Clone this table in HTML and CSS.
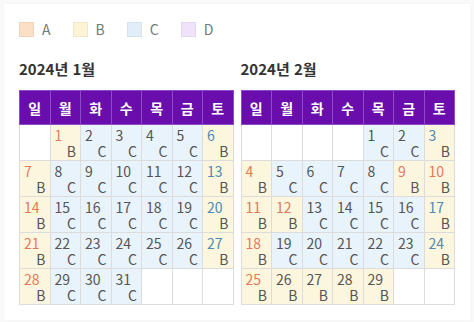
FILE: index.html
```html
<!DOCTYPE html>
<html lang="ko">
<head>
<meta charset="utf-8">
<link rel="stylesheet" href="styles.css">
</head>
<body>
<div class="card">
  <div class="legend">
    <div class="legend-item"><span class="sw sw-a"></span><span>A</span></div>
    <div class="legend-item"><span class="sw sw-b"></span><span>B</span></div>
    <div class="legend-item"><span class="sw sw-c"></span><span>C</span></div>
    <div class="legend-item"><span class="sw sw-d"></span><span>D</span></div>
  </div>
  <div class="months">
    <div class="month">
      <h3 class="title">2024년 1월</h3>
      <table class="cal">
        <thead>
          <tr><th>일</th><th>월</th><th>화</th><th>수</th><th>목</th><th>금</th><th>토</th></tr>
        </thead>
        <tbody>
          <tr>
            <td></td>
            <td class="b"><div class="cell"><span class="n red">1</span><span class="l">B</span></div></td>
            <td class="c"><div class="cell"><span class="n">2</span><span class="l">C</span></div></td>
            <td class="c"><div class="cell"><span class="n">3</span><span class="l">C</span></div></td>
            <td class="c"><div class="cell"><span class="n">4</span><span class="l">C</span></div></td>
            <td class="c"><div class="cell"><span class="n">5</span><span class="l">C</span></div></td>
            <td class="b"><div class="cell"><span class="n blue">6</span><span class="l">B</span></div></td>
          </tr>
          <tr>
            <td class="b"><div class="cell"><span class="n red">7</span><span class="l">B</span></div></td>
            <td class="c"><div class="cell"><span class="n">8</span><span class="l">C</span></div></td>
            <td class="c"><div class="cell"><span class="n">9</span><span class="l">C</span></div></td>
            <td class="c"><div class="cell"><span class="n">10</span><span class="l">C</span></div></td>
            <td class="c"><div class="cell"><span class="n">11</span><span class="l">C</span></div></td>
            <td class="c"><div class="cell"><span class="n">12</span><span class="l">C</span></div></td>
            <td class="b"><div class="cell"><span class="n blue">13</span><span class="l">B</span></div></td>
          </tr>
          <tr>
            <td class="b"><div class="cell"><span class="n red">14</span><span class="l">B</span></div></td>
            <td class="c"><div class="cell"><span class="n">15</span><span class="l">C</span></div></td>
            <td class="c"><div class="cell"><span class="n">16</span><span class="l">C</span></div></td>
            <td class="c"><div class="cell"><span class="n">17</span><span class="l">C</span></div></td>
            <td class="c"><div class="cell"><span class="n">18</span><span class="l">C</span></div></td>
            <td class="c"><div class="cell"><span class="n">19</span><span class="l">C</span></div></td>
            <td class="b"><div class="cell"><span class="n blue">20</span><span class="l">B</span></div></td>
          </tr>
          <tr>
            <td class="b"><div class="cell"><span class="n red">21</span><span class="l">B</span></div></td>
            <td class="c"><div class="cell"><span class="n">22</span><span class="l">C</span></div></td>
            <td class="c"><div class="cell"><span class="n">23</span><span class="l">C</span></div></td>
            <td class="c"><div class="cell"><span class="n">24</span><span class="l">C</span></div></td>
            <td class="c"><div class="cell"><span class="n">25</span><span class="l">C</span></div></td>
            <td class="c"><div class="cell"><span class="n">26</span><span class="l">C</span></div></td>
            <td class="b"><div class="cell"><span class="n blue">27</span><span class="l">B</span></div></td>
          </tr>
          <tr>
            <td class="b"><div class="cell"><span class="n red">28</span><span class="l">B</span></div></td>
            <td class="c"><div class="cell"><span class="n">29</span><span class="l">C</span></div></td>
            <td class="c"><div class="cell"><span class="n">30</span><span class="l">C</span></div></td>
            <td class="c"><div class="cell"><span class="n">31</span><span class="l">C</span></div></td>
            <td></td><td></td><td></td>
          </tr>
        </tbody>
      </table>
    </div>
    <div class="month">
      <h3 class="title">2024년 2월</h3>
      <table class="cal">
        <thead>
          <tr><th>일</th><th>월</th><th>화</th><th>수</th><th>목</th><th>금</th><th>토</th></tr>
        </thead>
        <tbody>
          <tr>
            <td></td><td></td><td></td><td></td>
            <td class="c"><div class="cell"><span class="n">1</span><span class="l">C</span></div></td>
            <td class="c"><div class="cell"><span class="n">2</span><span class="l">C</span></div></td>
            <td class="b"><div class="cell"><span class="n blue">3</span><span class="l">B</span></div></td>
          </tr>
          <tr>
            <td class="b"><div class="cell"><span class="n red">4</span><span class="l">B</span></div></td>
            <td class="c"><div class="cell"><span class="n">5</span><span class="l">C</span></div></td>
            <td class="c"><div class="cell"><span class="n">6</span><span class="l">C</span></div></td>
            <td class="c"><div class="cell"><span class="n">7</span><span class="l">C</span></div></td>
            <td class="c"><div class="cell"><span class="n">8</span><span class="l">C</span></div></td>
            <td class="b"><div class="cell"><span class="n red">9</span><span class="l">B</span></div></td>
            <td class="b"><div class="cell"><span class="n red">10</span><span class="l">B</span></div></td>
          </tr>
          <tr>
            <td class="b"><div class="cell"><span class="n red">11</span><span class="l">B</span></div></td>
            <td class="b"><div class="cell"><span class="n red">12</span><span class="l">B</span></div></td>
            <td class="c"><div class="cell"><span class="n">13</span><span class="l">C</span></div></td>
            <td class="c"><div class="cell"><span class="n">14</span><span class="l">C</span></div></td>
            <td class="c"><div class="cell"><span class="n">15</span><span class="l">C</span></div></td>
            <td class="c"><div class="cell"><span class="n">16</span><span class="l">C</span></div></td>
            <td class="b"><div class="cell"><span class="n blue">17</span><span class="l">B</span></div></td>
          </tr>
          <tr>
            <td class="b"><div class="cell"><span class="n red">18</span><span class="l">B</span></div></td>
            <td class="c"><div class="cell"><span class="n">19</span><span class="l">C</span></div></td>
            <td class="c"><div class="cell"><span class="n">20</span><span class="l">C</span></div></td>
            <td class="c"><div class="cell"><span class="n">21</span><span class="l">C</span></div></td>
            <td class="c"><div class="cell"><span class="n">22</span><span class="l">C</span></div></td>
            <td class="c"><div class="cell"><span class="n">23</span><span class="l">C</span></div></td>
            <td class="b"><div class="cell"><span class="n blue">24</span><span class="l">B</span></div></td>
          </tr>
          <tr>
            <td class="b"><div class="cell"><span class="n red">25</span><span class="l">B</span></div></td>
            <td class="b"><div class="cell"><span class="n">26</span><span class="l">B</span></div></td>
            <td class="b"><div class="cell"><span class="n">27</span><span class="l">B</span></div></td>
            <td class="b"><div class="cell"><span class="n">28</span><span class="l">B</span></div></td>
            <td class="b"><div class="cell"><span class="n">29</span><span class="l">B</span></div></td>
            <td></td><td></td>
          </tr>
        </tbody>
      </table>
    </div>
  </div>
</div>
</body>
</html>
```
FILE: styles.css
```css
html, body {
  margin: 0;
  padding: 0;
  background: #f9f9f9;
}
body {
  font-family: "Noto Sans CJK KR", "Noto Sans", sans-serif;
  color: #333;
}
.card {
  margin: 4px;
  padding: 15px;
  background: #fff;
  box-shadow: 0 0 2px rgba(0, 0, 0, 0.05);
}
.legend {
  display: flex;
  gap: 22px;
  height: 20px;
  margin-bottom: 20px;
}
.legend-item {
  display: flex;
  align-items: center;
  gap: 8px;
  font-size: 14px;
  line-height: 20px;
  color: #777;
}
.sw {
  width: 15px;
  height: 15px;
  box-sizing: border-box;
  border: 1px solid rgba(0, 0, 0, 0.05);
}
.sw-a { background: #fddfc6; }
.sw-b { background: #fdf3d5; }
.sw-c { background: #e1eef9; }
.sw-d { background: #efe3fb; }
.months {
  display: flex;
  gap: 7px;
}
.month {
  flex: 1;
  min-width: 0;
}
.title {
  margin: 0 0 11px;
  font-size: 15px;
  line-height: 20px;
  font-weight: 700;
  color: #333;
}
.cal {
  width: 100%;
  table-layout: fixed;
  border-collapse: collapse;
}
.cal th {
  height: 33px;
  padding: 0;
  background: #6a0dad;
  color: #fff;
  font-size: 14px;
  line-height: 20px;
  font-weight: 700;
  border: 1px solid #8d4cc4;
}
.cal td {
  padding: 0;
  height: 35px;
  border: 1px solid #dcdcdc;
  vertical-align: top;
  background: #fff;
}
.cal td.b { background: #fdf6de; }
.cal td.c { background: #e9f3fc; }
.cell {
  display: flex;
  flex-direction: column;
  justify-content: space-between;
  height: 35px;
  box-sizing: border-box;
  padding: 2px 4px 1px 4px;
  font-size: 14px;
  line-height: 16px;
}
.n { color: #555; }
.n.red { color: #e27a5c; }
.n.blue { color: #4f89b4; }
.l {
  text-align: right;
  color: #555;
}
```
